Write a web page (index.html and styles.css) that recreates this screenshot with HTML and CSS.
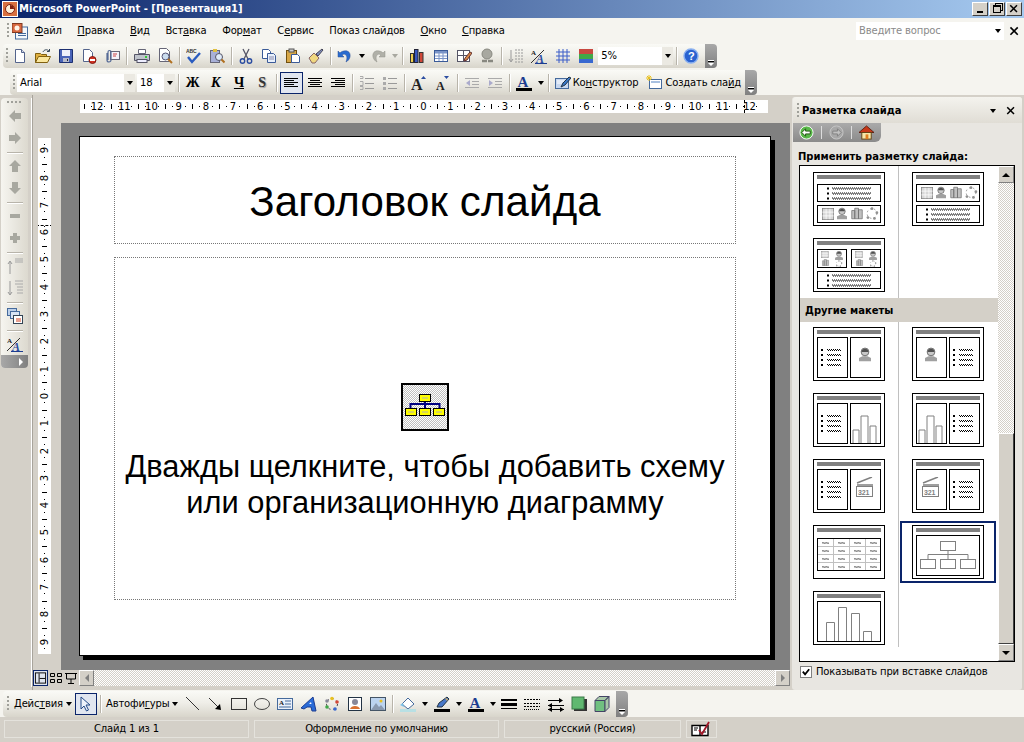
FILE: index.html
```html
<!DOCTYPE html>
<html lang="ru">
<head>
<meta charset="utf-8">
<title>Microsoft PowerPoint</title>
<link rel="stylesheet" href="styles.css">
</head>
<body>
<svg class="defs" aria-hidden="true">
<defs>
<symbol id="new" viewBox="0 0 16 16"><path d="M3.500 1.500h6l3 3v10h-9z" fill="#fff" stroke="#54648c"/><path d="M9.500 1.500v3h3" fill="#d8dcec" stroke="#54648c"/></symbol>
<symbol id="open" viewBox="0 0 16 16"><path d="M.5 5.500h5l1 1h5v8H.5z" fill="#e0b040" stroke="#806010"/><path d="M3.500 8.500h12l-3 6H.5z" fill="#fbe79c" stroke="#806010"/><path d="M8 4c1-2.500 4-3 6-1M14.500 1v2.500H12" fill="none" stroke="#345"/></symbol>
<symbol id="save" viewBox="0 0 16 16"><path d="M1.500 1.500h13v13h-13z" fill="#4a64b8" stroke="#1c2f70"/><rect x="4" y="2" width="8" height="6" fill="#eef0fa"/><rect x="5" y="10" width="6" height="4" fill="#b8bccc"/><rect x="9" y="11" width="1" height="2" fill="#223"/></symbol>
<symbol id="perm" viewBox="0 0 16 16"><path d="M2.500 1.500h6l3 3v9h-9z" fill="#fff" stroke="#54648c"/><circle cx="11.500" cy="12" r="3.500" fill="#d03020" stroke="#801810"/><rect x="9" y="11" width="5" height="2" fill="#fff"/></symbol>
<symbol id="mail" viewBox="0 0 16 16"><rect x="6.500" y="3.500" width="9" height="8" fill="#f4f4fa" stroke="#667"/><path d="M9 6h4M9 8h3" stroke="#c44"/><path d="M3 5v7a2 2 0 0 0 4 0V4a1.500 1.500 0 0 0-3 0v8" fill="none" stroke="#556a96" stroke-width="1.200"/></symbol>
<symbol id="print" viewBox="0 0 16 16"><path d="M4.500 1.500h7v4h-7z" fill="#fff" stroke="#667"/><path d="M.5 6.500h15v6h-15z" fill="#c0c4cc" stroke="#556"/><rect x="3" y="11.500" width="10" height="3" fill="#eef" stroke="#556"/><rect x="11" y="8" width="2" height="2" fill="#3c3"/></symbol>
<symbol id="prev" viewBox="0 0 16 16"><path d="M2.500 .5h7l3 3v10h-10z" fill="#fff" stroke="#667"/><circle cx="8.500" cy="8.500" r="3.500" fill="#cde" stroke="#557"/><path d="M11 11l4 4" stroke="#b07020" stroke-width="2"/></symbol>
<symbol id="spell" viewBox="0 0 16 16"><text x="0" y="5" class="tiny">ABC</text><path d="M2 9l4 5 8-9" fill="none" stroke="#2a5cc0" stroke-width="2.400"/></symbol>
<symbol id="research" viewBox="0 0 16 16"><rect x="1.500" y="2.500" width="9" height="12" fill="#a8b0d8" stroke="#667"/><rect x="4" y="1" width="4" height="3" fill="#e0c040"/><circle cx="10" cy="9" r="3.500" fill="#dfeaf8" stroke="#556"/><path d="M12.500 11.500l3 3" stroke="#b07020" stroke-width="2"/></symbol>
<symbol id="cut" viewBox="0 0 16 16"><path d="M5 1l5 10M11 1L6 11" stroke="#556" stroke-width="1.300" fill="none"/><circle cx="4.500" cy="13" r="2.200" fill="none" stroke="#2a4ca0" stroke-width="1.400"/><circle cx="11.500" cy="13" r="2.200" fill="none" stroke="#2a4ca0" stroke-width="1.400"/></symbol>
<symbol id="copy" viewBox="0 0 16 16"><path d="M1.500 1.500h6l2 2v7h-8z" fill="#fff" stroke="#3a5a98"/><path d="M6.500 5.500h6l2 2v7h-8z" fill="#e8f0fc" stroke="#3a5a98"/><path d="M8 9h5M8 11h5" stroke="#88a"/></symbol>
<symbol id="paste" viewBox="0 0 16 16"><rect x="1.500" y="2.500" width="10" height="12" fill="#d8a848" stroke="#705010"/><rect x="4" y="1" width="5" height="3" fill="#ccc" stroke="#555"/><path d="M6.500 6.500h6l2 2v6h-8z" fill="#fff" stroke="#3a5a98"/></symbol>
<symbol id="brush" viewBox="0 0 16 16"><path d="M1 10l5-5 5 5-4 5H4z" fill="#f0d880" stroke="#866"/><path d="M8 6l6-5 1 1-5 6z" fill="#8090c0" stroke="#445"/></symbol>
<symbol id="undo" viewBox="0 0 16 16"><path d="M4 4c6-3 10 0 9 5-.5 2-2 4-4 5 1-3 2-7-2-8l-2 1 2 2H1V3l2 2z" fill="#2a6cd0" stroke="#2a4c90" stroke-width=".5"/></symbol>
<symbol id="redo" viewBox="0 0 16 16"><path d="M12 4C6 1 2 4 3 9c.5 2 2 4 4 5-1-3-2-7 2-8l2 1-2 2h6V3l-2 2z" fill="#b0b0a8" stroke="#909088" stroke-width=".5"/></symbol>
<symbol id="chart" viewBox="0 0 16 16"><rect x="1.500" y="5.500" width="3" height="9" fill="#f0d050" stroke="#333"/><rect x="5.500" y="1.500" width="3.500" height="13" fill="#3858c0" stroke="#223"/><rect x="10.500" y="4.500" width="3.500" height="10" fill="#d04838" stroke="#333"/></symbol>
<symbol id="table" viewBox="0 0 16 16"><rect x="1.500" y="2.500" width="13" height="11" fill="#fff" stroke="#3a5a98"/><rect x="2" y="3" width="12" height="2.500" fill="#7a94c8"/><path d="M2 8h12M2 10.500h12M6 5v8M10 5v8" stroke="#7a94c8"/></symbol>
<symbol id="tb" viewBox="0 0 16 16"><rect x="1.500" y="2.500" width="12" height="11" fill="#fff" stroke="#556"/><path d="M2 7.500h11M7.500 3v10" stroke="#556"/><path d="M8 13l1-3 5-6 2 1-5 7z" fill="#d88848" stroke="#633"/></symbol>
<symbol id="link" viewBox="0 0 16 16"><circle cx="8" cy="6" r="5" fill="#a8a8a0" stroke="#888880"/><path d="M3 13h5M9 13h5" stroke="#888880" stroke-width="2.500"/></symbol>
<symbol id="expand" viewBox="0 0 16 16"><path d="M3 2v11M1 11l2 3 2-3" fill="none" stroke="#999"/><path d="M7 2h8M7 5h8M7 8h8M7 11h8M7 14h8" stroke="#999" stroke-dasharray="2 1"/></symbol>
<symbol id="aa" viewBox="0 0 16 16"><text x="0" y="7" class="tinyb">A</text><path d="M0 15L13 2" stroke="#333"/><text x="5" y="15" class="ablue">A</text><rect x="4" y="15" width="12" height="1" fill="#1c3c90"/></symbol>
<symbol id="grid" viewBox="0 0 16 16"><path d="M1 4h14M1 8h14M1 12h14M4 1v14M8 1v14M12 1v14" stroke="#3a5cc8"/></symbol>
<symbol id="color" viewBox="0 0 16 16"><rect x="1" y="1" width="14" height="5" fill="#c84840"/><rect x="1" y="6" width="14" height="5" fill="#40a848"/><rect x="1" y="11" width="14" height="4" fill="#3868d0"/></symbol>
<symbol id="help" viewBox="0 0 16 16"><circle cx="8" cy="8" r="7" fill="#2a62d0" stroke="#8ab0f0" stroke-width="1.400"/><text x="5" y="12" class="qm">?</text></symbol>
<symbol id="design" viewBox="0 0 16 16"><rect x=".5" y="3.500" width="13" height="10" fill="#c8d8f0" stroke="#456a9c"/><path d="M2 6h7M2 8h5" stroke="#fff"/><path d="M6 12l2-4 6-6 2 1-6 7z" fill="#3a78c8" stroke="#234"/></symbol>
<symbol id="newsl" viewBox="0 0 16 16"><rect x="3.500" y="4.500" width="12" height="9" fill="#fff" stroke="#456a9c"/><rect x="5" y="6" width="9" height="2" fill="#a8c0e0"/><path d="M3 0v6M0 3h6M1 1l4 4M5 1L1 5" stroke="#e8c020"/></symbol>
<symbol id="alL" viewBox="0 0 16 16"><path d="M1 3.500h14M1 5.500h10M1 7.500h14M1 9.500h10M1 11.500h14" stroke="#000"/></symbol>
<symbol id="alC" viewBox="0 0 16 16"><path d="M1 3.500h14M3 5.500h10M1 7.500h14M3 9.500h10M1 11.500h14" stroke="#000"/></symbol>
<symbol id="alR" viewBox="0 0 16 16"><path d="M1 3.500h14M5 5.500h10M1 7.500h14M5 9.500h10M1 11.500h14" stroke="#000"/></symbol>
<symbol id="num" viewBox="0 0 16 16"><path d="M6 3.500h9M6 8.500h9M6 13.500h9" stroke="#999"/><path d="M1 1.500h3v2H1M1 6.500h3v4H1M1 11.500h3v3H1" fill="none" stroke="#aaa"/></symbol>
<symbol id="bul" viewBox="0 0 16 16"><path d="M6 3.500h9M6 8.500h9M6 13.500h9" stroke="#999"/><rect x="1" y="2" width="3" height="3" fill="#aaa"/><rect x="1" y="7" width="3" height="3" fill="#aaa"/><rect x="1" y="12" width="3" height="3" fill="#aaa"/></symbol>
<symbol id="aup" viewBox="0 0 16 16"><text x="0" y="15" class="abig">A</text><path d="M10 4h5l-2.500-3z" fill="#2a4ca0"/></symbol>
<symbol id="adn" viewBox="0 0 16 16"><text x="2" y="15" class="asm">A</text><path d="M10 1h5l-2.500 3z" fill="#2a4ca0"/></symbol>
<symbol id="ind1" viewBox="0 0 16 16"><path d="M1 3.500h14M8 6.500h7M8 9.500h7M1 12.500h14" stroke="#aaa"/><path d="M6 5L2 8l4 3z" fill="#aac"/></symbol>
<symbol id="ind2" viewBox="0 0 16 16"><path d="M1 3.500h14M8 6.500h7M8 9.500h7M1 12.500h14" stroke="#aaa"/><path d="M2 5l4 3-4 3z" fill="#aac"/></symbol>
<symbol id="acol" viewBox="0 0 16 16"><text x="1.500" y="12" class="abig2">A</text><rect x="0" y="13" width="16" height="3" fill="#000"/></symbol>
<symbol id="larr" viewBox="0 0 16 16"><path d="M2 8l6-6v3h6v6H8v3z" fill="#a8a8a0"/></symbol>
<symbol id="rarr" viewBox="0 0 16 16"><path d="M14 8L8 2v3H2v6h6v3z" fill="#a8a8a0"/></symbol>
<symbol id="uarr" viewBox="0 0 16 16"><path d="M8 2l6 6h-3v6H5V8H2z" fill="#a8a8a0"/></symbol>
<symbol id="darr" viewBox="0 0 16 16"><path d="M8 14l6-6h-3V2H5v6H2z" fill="#a8a8a0"/></symbol>
<symbol id="minus" viewBox="0 0 16 16"><rect x="3" y="6" width="10" height="4" fill="#a8a8a0"/></symbol>
<symbol id="plus" viewBox="0 0 16 16"><path d="M6 3h4v3h3v4h-3v3H6v-3H3V6h3z" fill="#a8a8a0"/></symbol>
<symbol id="collapse" viewBox="0 0 16 16"><path d="M8 0h9M8 2h9M8 4h9" stroke="#aaa"/><path d="M3 4v12M1 6l2-3 2 3" fill="none" stroke="#999"/></symbol>
<symbol id="expand2" viewBox="0 0 16 16"><path d="M8 1h8M8 4h8M10 7h6M10 10h6M10 13h6" stroke="#aaa"/><path d="M3 1v13M1 12l2 3 2-3" fill="none" stroke="#999"/></symbol>
<symbol id="slides" viewBox="0 0 16 16"><rect x=".5" y=".5" width="9" height="7" fill="#bcd0ea" stroke="#456a9c"/><rect x="3.500" y="3.500" width="9" height="7" fill="#d8e4f4" stroke="#456a9c"/><rect x="6.500" y="7.500" width="9" height="8" fill="#fff" stroke="#345"/><path d="M9 11h5M9 13h5" stroke="#d04020"/></symbol>
<symbol id="cursor" viewBox="0 0 16 16"><path d="M3 1v12l3-3 2.500 5 2-1L8 9h4z" fill="#eef3fb" stroke="#234a88"/></symbol>
<symbol id="sline" viewBox="0 0 16 16"><path d="M1 1l13 13" stroke="#333"/></symbol>
<symbol id="sarrow" viewBox="0 0 16 16"><path d="M1 2l9 9" stroke="#333"/><path d="M7 13l6 1-1-6z" fill="#000"/></symbol>
<symbol id="srect" viewBox="0 0 16 16"><rect x=".5" y="2.500" width="15" height="11" fill="none" stroke="#333"/></symbol>
<symbol id="soval" viewBox="0 0 16 16"><ellipse cx="8" cy="8" rx="7.500" ry="5.500" fill="none" stroke="#444"/></symbol>
<symbol id="tbox" viewBox="0 0 16 16"><rect x=".5" y="2.500" width="15" height="11" fill="#eaf0fa" stroke="#456a9c"/><text x="2" y="9" class="tinyb">A</text><path d="M8 5h6M8 8h6M2 11h12" stroke="#456a9c"/></symbol>
<symbol id="wart" viewBox="0 0 16 16"><path d="M0 12L12 1l3 14h-4l-1-4H6l-3 2z" fill="#2a6cd8" stroke="#1c3c90"/><path d="M8 8l2-2 .5 2z" fill="#fff"/></symbol>
<symbol id="dgm" viewBox="0 0 16 16"><circle cx="8" cy="8" r="5.500" fill="none" stroke="#444" stroke-dasharray="2 3"/><circle cx="8" cy="2.500" r="1.800" fill="#e8c020"/><circle cx="13" cy="6" r="1.800" fill="#d04838"/><circle cx="11" cy="13" r="1.800" fill="#3868d0"/><circle cx="3" cy="11" r="1.800" fill="#40a848"/><circle cx="3" cy="5" r="1.800" fill="#889"/></symbol>
<symbol id="clip" viewBox="0 0 16 16"><rect x="1.500" y="1.500" width="13" height="13" fill="#fff" stroke="#234"/><circle cx="8" cy="6" r="3" fill="#889"/><path d="M3 13c1-4 9-4 10 0z" fill="#d87030"/></symbol>
<symbol id="pict" viewBox="0 0 16 16"><rect x=".5" y="1.500" width="15" height="13" fill="#bcd4f0" stroke="#456"/><path d="M1 14l5-7 3 4 2-2 4 5z" fill="#8a9ab0"/><circle cx="11" cy="5" r="1.500" fill="#e8c020"/></symbol>
<symbol id="fill" viewBox="0 0 16 16"><path d="M2 8l6-6 6 6-6 5z" fill="#fff" stroke="#456a9c"/><path d="M0 9l3-2 1 4z" fill="#7ac0e8"/><rect x="0" y="13" width="16" height="3" fill="#b8e0e4"/></symbol>
<symbol id="pen" viewBox="0 0 16 16"><path d="M3 11l2-4 8-6 2 2-7 8z" fill="#4878c8" stroke="#234"/><path d="M11 2l3 1-1 2z" fill="#d8b060"/><rect x="0" y="13" width="16" height="3" fill="#000"/></symbol>
<symbol id="lsty" viewBox="0 0 16 16"><rect x="0" y="3" width="16" height="2" fill="#000"/><rect x="0" y="7" width="16" height="3" fill="#000"/><rect x="0" y="12" width="16" height="1" fill="#000"/></symbol>
<symbol id="dash" viewBox="0 0 16 16"><path d="M0 3.500h16M0 7.500h16M0 10.500h16" stroke="#000" stroke-dasharray="2 1"/><path d="M0 13.500h16" stroke="#000" stroke-dasharray="1 1"/></symbol>
<symbol id="arrs" viewBox="0 0 16 16"><path d="M0 4.500h14M0 9.500h16M0 13.500h16" stroke="#000"/><path d="M11 2l4 2.500-4 2.500zM4 7L0 9.500 4 12zM12 11l4 2.500-4 2.500zM4 11L0 13.500 4 16z"/></symbol>
<symbol id="shad" viewBox="0 0 16 16"><rect x="3" y="3" width="13" height="12" fill="#333"/><rect x="1" y="1" width="12" height="12" fill="#60b870" stroke="#3a7a48"/></symbol>
<symbol id="cube" viewBox="0 0 16 16"><path d="M1 4.500h10v11H1z" fill="#70c080" stroke="#446"/><path d="M1 4.500l4-4h10l-4 4zM11 4.500l4-4v11l-4 4z" fill="#a8c8a8" stroke="#446"/></symbol>
<symbol id="book" viewBox="0 0 20 16"><path d="M1 4.500h8v10H1zM9 4.500h8v10H9z" fill="#fff" stroke="#000" stroke-width="1.400"/><path d="M3 7h4M3 9h3M11 11h4" stroke="#000"/><path d="M8 9l3 4 7-12" fill="none" stroke="#a01828" stroke-width="1.800"/></symbol>
<symbol id="x" viewBox="0 0 16 16"><path d="M3 3l9 9M12 3l-9 9" stroke="#000" stroke-width="2"/></symbol>
<symbol id="logo" viewBox="0 0 16 16"><rect x="3.500" y="3.500" width="12" height="12" fill="#f4f8fc" stroke="#456a9c"/><path d="M6 10h8M6 12h8" stroke="#456a9c"/><rect x="0" y="0" width="10" height="9" fill="#d86840" stroke="#803820"/><circle cx="5" cy="4.500" r="2.500" fill="#fff4e8"/></symbol>
<symbol id="tlogo" viewBox="0 0 16 16"><rect x=".5" y=".5" width="15" height="15" fill="#d87040" stroke="#fff"/><circle cx="8" cy="8" r="4.500" fill="#fff0d8" stroke="#802010"/><path d="M8 8V4a4 4 0 0 1 4 4z" fill="#802010"/></symbol>
<symbol id="bullets3" viewBox="0 0 64 17"><path d="M15 3.500h39M15 8.500h39M15 13.500h39" stroke="#000" stroke-dasharray="1 1"/><path d="M15 4.500h39M15 9.500h39M15 14.500h39" stroke="#000" stroke-dasharray="1 1" stroke-dashoffset="1"/><rect x="10" y="3" width="2" height="2"/><rect x="10" y="8" width="2" height="2"/><rect x="10" y="13" width="2" height="2"/></symbol>
<symbol id="bullets4" viewBox="0 0 32 40"><path d="M10 12.500h14M10 17.500h14M10 22.500h14M10 27.500h14" stroke="#000" stroke-dasharray="1 1"/><path d="M10 13.500h14M10 18.500h14M10 23.500h14M10 28.500h14" stroke="#000" stroke-dasharray="1 1" stroke-dashoffset="1"/><rect x="4" y="12" width="2" height="2"/><rect x="4" y="17" width="2" height="2"/><rect x="4" y="22" width="2" height="2"/><rect x="4" y="27" width="2" height="2"/></symbol>
<symbol id="person" viewBox="0 0 14 16"><path d="M0 16v-4l4-2h6l4 2v4z" fill="#a0a0a0"/><circle cx="7" cy="5" r="4.500" fill="#c8c8c8" stroke="#606060"/><path d="M3 5c0-5 8-5 8 0" fill="#505050"/></symbol>
<symbol id="tgrid" viewBox="0 0 16 16"><rect x=".5" y=".5" width="15" height="15" fill="#d8d8d8" stroke="#808080"/><path d="M.5 5.500h15M.5 10.500h15M5.500 1v14M10.500 1v14" stroke="#fff"/></symbol>
<symbol id="tchart" viewBox="0 0 16 16"><path d="M1 15V4h4v11M5 15V1h5v14M10 15V3h5v12H1" fill="#c0c0c0" stroke="#707070"/></symbol>
<symbol id="tdiag" viewBox="0 0 16 16"><circle cx="8" cy="8" r="6" fill="none" stroke="#808080" stroke-dasharray="2 3"/><circle cx="8" cy="2" r="1.700" fill="#909090"/><circle cx="14" cy="7" r="1.700" fill="#909090"/><circle cx="11" cy="14" r="1.700" fill="#909090"/><circle cx="3" cy="13" r="1.700" fill="#909090"/></symbol>
<symbol id="th-base" viewBox="0 0 72 54"><rect x=".5" y=".5" width="71" height="53" fill="#fff" stroke="#000"/><rect x="4" y="3" width="64" height="4" fill="#808080"/></symbol>
<symbol id="clapper" viewBox="0 0 18 20"><path d="M1 6L16 0M1 8h16" stroke="#808080" stroke-width="1.500"/><rect x=".5" y="9.500" width="16" height="10" fill="#fff" stroke="#808080"/><text x="2" y="17.500" class="clap">321</text></symbol>
<symbol id="bars" viewBox="0 0 30 30"><path d="M1 30V17h6v13M9 30V3h7v27M18 30V13h6v17" fill="none" stroke="#808080"/></symbol>
<symbol id="wave" viewBox="0 0 10 2"><path d="M0 .5h10" stroke="#000" stroke-dasharray="1 1"/><path d="M0 1.500h10" stroke="#000" stroke-dasharray="1 1" stroke-dashoffset="1"/></symbol>
</defs>
</svg>

<div class="app">
  <header class="titlebar">
    <svg class="ic"><use href="#tlogo"/></svg>
    <span class="title-text">Microsoft PowerPoint - [Презентация1]</span>
    <span class="winbtns">
      <span class="wbtn"><i class="w-min"></i></span>
      <span class="wbtn"><i class="w-max"></i></span>
      <span class="wbtn"><svg class="wx"><use href="#x"/></svg></span>
    </span>
  </header>

  <div class="chrome">
    <nav class="menubar">
      <i class="grip"></i>
      <svg class="ic menu-logo"><use href="#logo"/></svg>
      <span class="mi"><u>Ф</u>айл</span>
      <span class="mi"><u>П</u>равка</span>
      <span class="mi"><u>В</u>ид</span>
      <span class="mi">Вст<u>а</u>вка</span>
      <span class="mi">Фор<u>м</u>ат</span>
      <span class="mi">С<u>е</u>рвис</span>
      <span class="mi">Показ слайдов</span>
      <span class="mi"><u>О</u>кно</span>
      <span class="mi"><u>С</u>правка</span>
      <span class="ask"><span class="ask-text">Введите вопрос</span><span class="dd-plain"><i class="caret"></i></span></span>
      <svg class="menu-x"><use href="#x"/></svg>
    </nav>

    <div class="toolbar tb1">
      <i class="grip"></i>
      <span class="b"><svg class="ic"><use href="#new"/></svg></span>
      <span class="b"><svg class="ic"><use href="#open"/></svg></span>
      <span class="b"><svg class="ic"><use href="#save"/></svg></span>
      <span class="b"><svg class="ic"><use href="#perm"/></svg></span>
      <span class="b"><svg class="ic"><use href="#mail"/></svg></span>
      <i class="sep"></i>
      <span class="b"><svg class="ic"><use href="#print"/></svg></span>
      <span class="b"><svg class="ic"><use href="#prev"/></svg></span>
      <i class="sep"></i>
      <span class="b"><svg class="ic"><use href="#spell"/></svg></span>
      <span class="b"><svg class="ic"><use href="#research"/></svg></span>
      <i class="sep"></i>
      <span class="b"><svg class="ic"><use href="#cut"/></svg></span>
      <span class="b"><svg class="ic"><use href="#copy"/></svg></span>
      <span class="b"><svg class="ic"><use href="#paste"/></svg></span>
      <span class="b"><svg class="ic"><use href="#brush"/></svg></span>
      <i class="sep"></i>
      <span class="b"><svg class="ic"><use href="#undo"/></svg></span>
      <span class="dd"><i class="caret"></i></span>
      <span class="b"><svg class="ic"><use href="#redo"/></svg></span>
      <span class="dd"><i class="caret off"></i></span>
      <i class="sep"></i>
      <span class="b"><svg class="ic"><use href="#chart"/></svg></span>
      <span class="b"><svg class="ic"><use href="#table"/></svg></span>
      <span class="b"><svg class="ic"><use href="#tb"/></svg></span>
      <span class="b"><svg class="ic"><use href="#link"/></svg></span>
      <i class="sep"></i>
      <span class="b"><svg class="ic"><use href="#expand"/></svg></span>
      <span class="b"><svg class="ic"><use href="#aa"/></svg></span>
      <span class="b"><svg class="ic"><use href="#grid"/></svg></span>
      <span class="b"><svg class="ic"><use href="#color"/></svg></span>
      <span class="combo zoom"><span class="combo-text">5%</span><span class="combo-dd"><i class="caret"></i></span></span>
      <i class="sep"></i>
      <span class="b"><svg class="ic"><use href="#help"/></svg></span>
      <i class="chev"></i>
    </div>

    <div class="toolbar tb2">
      <i class="grip"></i>
      <span class="combo font"><span class="combo-text">Arial</span><span class="combo-dd"><i class="caret"></i></span></span>
      <span class="combo size"><span class="combo-text">18</span><span class="combo-dd"><i class="caret"></i></span></span>
      <i class="sep"></i>
      <span class="b fmt">Ж</span>
      <span class="b fmt it">К</span>
      <span class="b fmt ul">Ч</span>
      <span class="b fmt sh">S</span>
      <i class="sep"></i>
      <span class="b on"><svg class="ic"><use href="#alL"/></svg></span>
      <span class="b"><svg class="ic"><use href="#alC"/></svg></span>
      <span class="b"><svg class="ic"><use href="#alR"/></svg></span>
      <i class="sep"></i>
      <span class="b"><svg class="ic"><use href="#num"/></svg></span>
      <span class="b"><svg class="ic"><use href="#bul"/></svg></span>
      <i class="sep"></i>
      <span class="b"><svg class="ic"><use href="#aup"/></svg></span>
      <span class="b"><svg class="ic"><use href="#adn"/></svg></span>
      <i class="sep"></i>
      <span class="b"><svg class="ic"><use href="#ind1"/></svg></span>
      <span class="b"><svg class="ic"><use href="#ind2"/></svg></span>
      <i class="sep"></i>
      <span class="b"><svg class="ic"><use href="#acol"/></svg></span>
      <span class="dd"><i class="caret"></i></span>
      <i class="sep"></i>
      <span class="tbtn"><svg class="ic"><use href="#design"/></svg><span>Ко<u>н</u>структор</span></span>
      <span class="tbtn tbtn-new"><svg class="ic"><use href="#newsl"/></svg><span>Создать сла<u>й</u>д</span></span>
      <i class="chev"></i>
    </div>
  </div>

  <main class="main">
    <aside class="vtoolbar">
      <i class="vgrip"></i>
      <span class="vb"><svg class="ic"><use href="#larr"/></svg></span>
      <span class="vb"><svg class="ic"><use href="#rarr"/></svg></span>
      <i class="vsep"></i>
      <span class="vb"><svg class="ic"><use href="#uarr"/></svg></span>
      <span class="vb"><svg class="ic"><use href="#darr"/></svg></span>
      <i class="vsep"></i>
      <span class="vb"><svg class="ic"><use href="#minus"/></svg></span>
      <span class="vb"><svg class="ic"><use href="#plus"/></svg></span>
      <i class="vsep"></i>
      <span class="vb"><svg class="ic"><use href="#collapse"/></svg></span>
      <span class="vb"><svg class="ic"><use href="#expand2"/></svg></span>
      <i class="vsep"></i>
      <span class="vb"><svg class="ic"><use href="#slides"/></svg></span>
      <i class="vsep"></i>
      <span class="vb"><svg class="ic"><use href="#aa"/></svg></span>
      <i class="vchev"></i>
    </aside>

    <section class="editor">
      <div class="hruler-row">
        <div class="hruler">
          <span>12</span><span>11</span><span>10</span><span>9</span><span>8</span><span>7</span><span>6</span><span>5</span><span>4</span><span>3</span><span>2</span><span>1</span><span>0</span><span>1</span><span>2</span><span>3</span><span>4</span><span>5</span><span>6</span><span>7</span><span>8</span><span>9</span><span>10</span><span>11</span><span>12</span>
          <i class="hmark"></i>
        </div>
      </div>
      <div class="work-row">
        <div class="vruler-col">
          <div class="vruler">
            <span><b>9</b></span><span><b>8</b></span><span><b>7</b></span><span><b>6</b></span><span><b>5</b></span><span><b>4</b></span><span><b>3</b></span><span><b>2</b></span><span><b>1</b></span><span><b>0</b></span><span><b>1</b></span><span><b>2</b></span><span><b>3</b></span><span><b>4</b></span><span><b>5</b></span><span><b>6</b></span><span><b>7</b></span><span><b>8</b></span><span><b>9</b></span>
            <i class="vmark"></i>
          </div>
        </div>
        <div class="work">
          <div class="slide">
            <div class="ph ph-title">Заголовок слайда</div>
            <div class="ph ph-body">
              <svg class="org" viewBox="0 0 48 48">
                <rect x="1" y="1" width="46" height="46" fill="none" stroke="#000" stroke-width="2"/>
                <path d="M24 18v3M9.500 25v-4h29v4M24 21v4" fill="none" stroke="#000080" stroke-width="2"/>
                <g fill="#ffff00" stroke="#000"><rect x="18.500" y="11.500" width="11" height="7"/><rect x="4.500" y="25.500" width="11" height="7"/><rect x="18.500" y="25.500" width="11" height="7"/><rect x="32.500" y="25.500" width="11" height="7"/></g>
                <path d="M21 15h6M7 29h6M21 29h6M35 29h6" stroke="#b0b0b0"/>
              </svg>
              <div class="ph-text">Дважды щелкните, чтобы добавить схему<br>или организационную диаграмму</div>
            </div>
          </div>
        </div>
      </div>
      <div class="hscroll-row">
        <div class="views">
          <span class="view on"><svg viewBox="0 0 14 14"><rect x="1.500" y="1.500" width="11" height="11" fill="none" stroke="#000"/><path d="M5.500 2v10M6 7.500h6" stroke="#000"/></svg></span>
          <span class="view"><svg viewBox="0 0 14 14"><path d="M1.500 2.500h4v3h-4zM8.500 2.500h4v3h-4zM1.500 8.500h4v3h-4zM8.500 8.500h4v3h-4z" fill="none" stroke="#000"/></svg></span>
          <span class="view"><svg viewBox="0 0 14 14"><path d="M1 2.500h12M2.500 3v5h9V3M7 8v4M4 12.500h6" fill="none" stroke="#000"/></svg></span>
        </div>
        <span class="sbtn"><i class="tri-l"></i></span>
        <span class="strack"></span>
        <span class="sbtn"><i class="tri-r"></i></span>
      </div>
    </section>

    <aside class="pane">
      <div class="pane-head"><i class="grip"></i><span class="pane-title">Разметка слайда</span><i class="caret pane-caret"></i><svg class="pane-x"><use href="#x"/></svg></div>
      <div class="pane-nav">
        <svg class="nav-ic" viewBox="0 0 16 16"><circle cx="8" cy="8" r="7" fill="#58b848" stroke="#fff"/><path d="M3 8l4-4v2.500h5v3H7V12z" fill="#fff" stroke="#205010"/></svg>
        <i class="nav-sep"></i>
        <svg class="nav-ic" viewBox="0 0 16 16"><circle cx="8" cy="8" r="7" fill="#a8a8a8" stroke="#c8c8c8"/><path d="M13 8L9 4v2.500H4v3h5V12z" fill="#c0c0c0" stroke="#808080"/></svg>
        <i class="nav-sep"></i>
        <svg class="nav-ic" viewBox="0 0 16 16"><path d="M0 8l8-7 8 7z" fill="#c83818" stroke="#602010"/><rect x="3" y="8" width="10" height="7" fill="#f8e8a8" stroke="#604010"/><rect x="7" y="10" width="3" height="5" fill="#e08020"/></svg>
      </div>
      <div class="pane-label">Применить разметку слайда:</div>
      <div class="list">
        <div class="list-main">
          <div class="thumbs">
            <div class="cell"><svg class="th" viewBox="0 0 72 54"><use href="#th-base" width="72" height="54"/><g fill="none" stroke="#000"><rect x="4.500" y="12.500" width="63" height="17"/><rect x="4.500" y="33.500" width="63" height="17"/></g><use href="#bullets3" x="4" y="12.500" width="64" height="17"/><use href="#tgrid" x="9" y="36" width="12" height="12"/><use href="#person" x="24" y="35" width="10" height="13"/><use href="#tchart" x="38" y="35" width="12" height="13"/><use href="#tdiag" x="52" y="35" width="14" height="13"/></svg></div>
            <div class="cell"><svg class="th" viewBox="0 0 72 54"><use href="#th-base" width="72" height="54"/><g fill="none" stroke="#000"><rect x="4.500" y="12.500" width="63" height="17"/><rect x="4.500" y="33.500" width="63" height="17"/></g><use href="#tgrid" x="9" y="15" width="12" height="12"/><use href="#person" x="24" y="14" width="10" height="13"/><use href="#tchart" x="38" y="14" width="12" height="13"/><use href="#tdiag" x="52" y="14" width="14" height="13"/><use href="#bullets3" x="4" y="33.500" width="64" height="17"/></svg></div>
            <div class="cell"><svg class="th" viewBox="0 0 72 54"><use href="#th-base" width="72" height="54"/><g fill="none" stroke="#000"><rect x="4.500" y="11.500" width="29" height="18"/><rect x="38.500" y="11.500" width="29" height="18"/><rect x="4.500" y="33.500" width="63" height="17"/></g><use href="#tgrid" x="7" y="13" width="10" height="7"/><use href="#person" x="22" y="13" width="8" height="9"/><use href="#tchart" x="8" y="21" width="9" height="7"/><use href="#tdiag" x="21" y="22" width="10" height="7"/><use href="#tgrid" x="41" y="13" width="10" height="7"/><use href="#person" x="56" y="13" width="8" height="9"/><use href="#tchart" x="42" y="21" width="9" height="7"/><use href="#tdiag" x="55" y="22" width="10" height="7"/><use href="#bullets3" x="4" y="33.500" width="64" height="17"/></svg></div>
          </div>
          <div class="group">Другие макеты</div>
          <div class="thumbs t2">
            <div class="cell"><svg class="th" viewBox="0 0 72 54"><use href="#th-base" width="72" height="54"/><g fill="none" stroke="#000"><rect x="4.500" y="10.500" width="30" height="40"/><rect x="37.500" y="10.500" width="30" height="40"/></g><use href="#bullets4" x="4" y="10" width="32" height="40"/><use href="#person" x="46" y="20" width="12" height="15"/></svg></div>
            <div class="cell"><svg class="th" viewBox="0 0 72 54"><use href="#th-base" width="72" height="54"/><g fill="none" stroke="#000"><rect x="4.500" y="10.500" width="30" height="40"/><rect x="37.500" y="10.500" width="30" height="40"/></g><use href="#person" x="13" y="20" width="12" height="15"/><use href="#bullets4" x="37" y="10" width="32" height="40"/></svg></div>
            <div class="cell"><svg class="th" viewBox="0 0 72 54"><use href="#th-base" width="72" height="54"/><g fill="none" stroke="#000"><rect x="4.500" y="10.500" width="30" height="40"/><rect x="37.500" y="10.500" width="30" height="40"/></g><use href="#bullets4" x="4" y="10" width="32" height="40"/><use href="#bars" x="39" y="20" width="30" height="30"/></svg></div>
            <div class="cell"><svg class="th" viewBox="0 0 72 54"><use href="#th-base" width="72" height="54"/><g fill="none" stroke="#000"><rect x="4.500" y="10.500" width="30" height="40"/><rect x="37.500" y="10.500" width="30" height="40"/></g><use href="#bars" x="6" y="20" width="30" height="30"/><use href="#bullets4" x="37" y="10" width="32" height="40"/></svg></div>
            <div class="cell"><svg class="th" viewBox="0 0 72 54"><use href="#th-base" width="72" height="54"/><g fill="none" stroke="#000"><rect x="4.500" y="10.500" width="30" height="40"/><rect x="37.500" y="10.500" width="30" height="40"/></g><use href="#bullets4" x="4" y="10" width="32" height="40"/><use href="#clapper" x="43" y="18" width="18" height="20"/></svg></div>
            <div class="cell"><svg class="th" viewBox="0 0 72 54"><use href="#th-base" width="72" height="54"/><g fill="none" stroke="#000"><rect x="4.500" y="10.500" width="30" height="40"/><rect x="37.500" y="10.500" width="30" height="40"/></g><use href="#clapper" x="10" y="18" width="18" height="20"/><use href="#bullets4" x="37" y="10" width="32" height="40"/></svg></div>
            <div class="cell"><svg class="th" viewBox="0 0 72 54"><use href="#th-base" width="72" height="54"/><rect x="4.500" y="13.500" width="63" height="32" fill="#fff" stroke="#000"/><path d="M5 21.500h62M5 29.500h62M5 37.500h62M20.500 14v31M36.500 14v31M52.500 14v31" stroke="#c0c0c0"/><g><use href="#wave" x="9" y="17" width="7" height="2"/><use href="#wave" x="25" y="17" width="7" height="2"/><use href="#wave" x="41" y="17" width="7" height="2"/><use href="#wave" x="57" y="17" width="7" height="2"/><use href="#wave" x="9" y="25" width="7" height="2"/><use href="#wave" x="25" y="25" width="7" height="2"/><use href="#wave" x="41" y="25" width="7" height="2"/><use href="#wave" x="57" y="25" width="7" height="2"/><use href="#wave" x="9" y="33" width="7" height="2"/><use href="#wave" x="25" y="33" width="7" height="2"/><use href="#wave" x="41" y="33" width="7" height="2"/><use href="#wave" x="57" y="33" width="7" height="2"/><use href="#wave" x="9" y="41" width="7" height="2"/><use href="#wave" x="25" y="41" width="7" height="2"/><use href="#wave" x="41" y="41" width="7" height="2"/><use href="#wave" x="57" y="41" width="7" height="2"/></g></svg></div>
            <div class="cell sel"><svg class="th" viewBox="0 0 72 54"><use href="#th-base" width="72" height="54"/><rect x="4.500" y="10.500" width="63" height="40" fill="none" stroke="#000"/><g fill="none" stroke="#808080"><rect x="28.500" y="16.500" width="15" height="9"/><rect x="8.500" y="34.500" width="15" height="9"/><rect x="28.500" y="34.500" width="15" height="9"/><rect x="48.500" y="34.500" width="15" height="9"/><path d="M36 26v8M16 34v-4.500h40V34"/></g></svg></div>
            <div class="cell"><svg class="th" viewBox="0 0 72 54"><use href="#th-base" width="72" height="54"/><rect x="4.500" y="10.500" width="63" height="40" fill="none" stroke="#000"/><path d="M13.500 50V31.500h8V50M25.500 50V16.500h8V50M38.500 50V22.500h8V50M50.500 50V40.500h8V50" fill="none" stroke="#808080"/></svg></div>
          </div>
        </div>
        <div class="vscroll">
          <span class="sbtn v"><i class="tri-u"></i></span>
          <span class="vtrack"></span>
          <span class="vthumb"></span>
          <span class="sbtn v"><i class="tri-d"></i></span>
        </div>
      </div>
      <label class="show"><span class="chk"><svg viewBox="0 0 11 11"><path d="M2 5l2.500 3L9 2.500" fill="none" stroke="#000" stroke-width="2"/></svg></span>Показывать при вставке слайдов</label>
    </aside>
  </main>

  <div class="draw-band">
    <div class="toolbar tb3">
      <i class="grip"></i>
      <span class="tbtn act"><span>Дейс<u>т</u>вия</span><i class="caret"></i></span>
      <span class="b on cur"><svg class="ic"><use href="#cursor"/></svg></span>
      <i class="sep"></i>
      <span class="tbtn shapes"><span>Автофи<u>г</u>уры</span><i class="caret"></i></span>
      <span class="b"><svg class="ic"><use href="#sline"/></svg></span>
      <span class="b"><svg class="ic"><use href="#sarrow"/></svg></span>
      <span class="b"><svg class="ic"><use href="#srect"/></svg></span>
      <span class="b"><svg class="ic"><use href="#soval"/></svg></span>
      <span class="b"><svg class="ic"><use href="#tbox"/></svg></span>
      <span class="b"><svg class="ic"><use href="#wart"/></svg></span>
      <span class="b"><svg class="ic"><use href="#dgm"/></svg></span>
      <span class="b"><svg class="ic"><use href="#clip"/></svg></span>
      <span class="b"><svg class="ic"><use href="#pict"/></svg></span>
      <i class="sep"></i>
      <span class="b n"><svg class="ic"><use href="#fill"/></svg></span><span class="dd"><i class="caret"></i></span>
      <span class="b n"><svg class="ic"><use href="#pen"/></svg></span><span class="dd"><i class="caret"></i></span>
      <span class="b n"><svg class="ic"><use href="#acol"/></svg></span><span class="dd"><i class="caret"></i></span>
      <span class="b"><svg class="ic"><use href="#lsty"/></svg></span>
      <span class="b"><svg class="ic"><use href="#dash"/></svg></span>
      <span class="b"><svg class="ic"><use href="#arrs"/></svg></span>
      <span class="b"><svg class="ic"><use href="#shad"/></svg></span>
      <span class="b"><svg class="ic"><use href="#cube"/></svg></span>
      <i class="chev"></i>
    </div>
  </div>

  <footer class="status">
    <span class="panel p1">Слайд 1 из 1</span>
    <span class="panel p2">Оформление по умолчанию</span>
    <span class="panel p3">русский (Россия)</span>
    <span class="panel p4"><svg class="book"><use href="#book"/></svg></span>
  </footer>
</div>
</body>
</html>
```
FILE: styles.css
```css
* { box-sizing: border-box; }
html, body { margin: 0; padding: 0; }
body { width: 1024px; height: 742px; overflow: hidden; background: #d4d0c8; color: #000; font: 10px/1 "DejaVu Sans", sans-serif; letter-spacing: -0.17px; }
i { display: block; font-style: normal; }
u { text-underline-offset: 1px; }
.defs { position: absolute; width: 0; height: 0; }
.tiny { font: bold 5px "Liberation Sans", sans-serif; fill: #333; }
.tinyb { font: bold 7px "Liberation Serif", serif; fill: #222; }
.ablue { font: bold italic 12px "Liberation Serif", serif; fill: #2a4ca0; }
.qm { font: bold 11px "Liberation Sans", sans-serif; fill: #fff; }
.abig { font: bold 16px "Liberation Serif", serif; fill: #222; }
.asm { font: bold 12px "Liberation Serif", serif; fill: #222; }
.abig2 { font: bold 15px "Liberation Serif", serif; fill: #1c3c90; }
.clap { font: bold 7px "Liberation Sans", sans-serif; fill: #808080; }

.app { display: flex; flex-direction: column; width: 1024px; height: 742px; }
.ic { width: 16px; height: 16px; flex: none; display: block; }

.titlebar { height: 18px; flex: none; display: flex; align-items: center; padding: 0 2px; gap: 1px; background: linear-gradient(90deg, #0a246a, #a6caf0); }
.title-text { color: #fff; font: bold 10px/1 "DejaVu Sans", sans-serif; letter-spacing: 0; white-space: nowrap; }
.winbtns { margin-left: auto; display: flex; gap: 1px; }
.wbtn { width: 16px; height: 14px; background: #d4d0c8; border: 1px solid; border-color: #fff #404040 #404040 #fff; display: flex; align-items: center; justify-content: center; position: relative; }
.w-min { width: 6px; height: 2px; background: #000; align-self: flex-end; margin-bottom: 2px; }
.w-max { width: 8px; height: 8px; border: 1px solid #000; border-top-width: 2px; box-shadow: 2px -2px 0 -1px #d4d0c8, 2px -2px 0 0 #000; }
.wx { width: 12px; height: 12px; }

.chrome { height: 77px; flex: none; background: #f5f4ef; display: flex; flex-direction: column; }
.menubar { height: 26px; flex: none; display: flex; align-items: center; padding-left: 7px; }
.grip { width: 2px; height: 16px; flex: none; background: linear-gradient(#a0a09a 2px, transparent 2px) 0 0 / 2px 4px repeat-y; }
.menu-logo { margin: 0 -1px 0 3px; width: 16px; height: 17px; }
.mi { padding: 0 7.800px; white-space: nowrap; font-size: 10px; }
.ask { margin-left: auto; width: 148px; height: 18px; background: #fff; display: flex; align-items: center; color: #8a8a8a; padding-left: 3px; }
.ask-text { flex: 1; }
.dd-plain { width: 12px; display: flex; justify-content: center; }
.menu-x { width: 13px; height: 13px; margin: 0 3px 0 4px; }

.toolbar { display: flex; align-items: center; border-radius: 4px; background: linear-gradient(#fafaf6, #efeee8 45%, #d8d5cb); flex: none; }
.tb1 { width: 714px; height: 24px; margin-left: 3px; padding-left: 3px; }
.tb2 { width: 747px; height: 25px; margin: 2px 0 0 10px; padding-left: 3px; }
.b { width: 23.200px; height: 22px; display: flex; align-items: center; justify-content: center; flex: none; }
.b.n { width: 24px; }
.b.on { background: #e1e6f0; border: 1px solid #0a246a; }
.dd { width: 10px; height: 22px; display: flex; align-items: center; justify-content: center; flex: none; }
.caret { width: 0; height: 0; border: 3px solid transparent; border-top: 4px solid #000; border-bottom: 0; flex: none; }
.caret.off { border-top-color: #a8a8a0; }
.sep { width: 1px; height: 18px; background: #b8b4aa; box-shadow: 1px 0 0 #fff; flex: none; margin: 0 2.500px; }
.chev { width: 12px; height: 100%; margin-left: auto; flex: none; background: linear-gradient(#a8a8a8, #808080); border-radius: 0 4px 4px 0; position: relative; }
.chev::before { content: ""; position: absolute; left: 3px; bottom: 7px; width: 6px; height: 1px; background: #fff; box-shadow: 0 1px 0 #000; }
.chev::after { content: ""; position: absolute; left: 3px; bottom: 2px; border: 3px solid transparent; border-top: 3px solid #fff; border-bottom: 0; }

.combo { height: 18px; background: #fff; display: flex; align-items: center; flex: none; }
.combo-text { flex: 1; padding-left: 3px; }
.combo-dd { width: 11px; height: 100%; background: #ebe9e2; display: flex; align-items: center; justify-content: center; }
.font { width: 118px; margin-left: 2px; }
.size { width: 38px; margin-left: 2px; }
.zoom { width: 75px; margin-left: 1px; }
.fmt { font: bold 14px "Liberation Serif", serif; }
.it { font-style: italic; }
.ul { text-decoration: underline; }
.sh { color: #333; text-shadow: 1px 1px 1px #999; }
.tbtn { display: inline-flex; align-items: center; gap: 2px; white-space: nowrap; flex: none; padding: 0 3px; }
.tbtn-new { gap: 3px; margin-left: 2px; }

.main { height: 595px; flex: none; display: flex; background: #d4d0c8; }
.vtoolbar { width: 27px; height: 270px; margin: 3px 0 0 1px; flex: none; display: flex; flex-direction: column; align-items: center; border-radius: 4px; background: linear-gradient(90deg, #f6f5f0, #dcd9cf); padding-top: 3px; }
.vgrip { width: 16px; height: 2px; background: linear-gradient(90deg, #a0a09a 2px, transparent 2px) 0 0 / 4px 2px repeat-x; margin-bottom: 2px; }
.vb { width: 24px; height: 22px; flex: none; display: flex; align-items: center; justify-content: center; }
.vsep { width: 16px; height: 1px; background: #b8b4aa; box-shadow: 0 1px 0 #fff; margin: 2.500px 0; flex: none; }
.vchev { width: 100%; height: 13px; margin-top: auto; background: linear-gradient(90deg, #a8a8a8, #808080); border-radius: 0 0 4px 4px; position: relative; }
.vchev::after { content: ""; position: absolute; right: 5px; top: 3px; border: 4px solid transparent; border-left: 4px solid #fff; border-right: 0; }

.editor { width: 758px; margin-left: 4px; flex: none; display: flex; flex-direction: column; border-left: 1px solid #a8a49c; box-shadow: -4px 0 0 -3px #fff; }
.hruler-row { height: 28px; flex: none; padding: 5px 0 0 47px; }
.hruler { position: relative; width: 688px; height: 13px; background: #fff; display: flex; padding-left: 3.500px; overflow: hidden; }
.hruler span { flex: 0 0 27.200px; text-align: center; line-height: 13px; font-size: 10px; letter-spacing: 0; background-image: linear-gradient(#000, #000), linear-gradient(#000, #000), linear-gradient(#000, #000); background-size: 1px 5px, 1px 1px, 1px 1px; background-position: 0 4px, 7px 6px, 20px 6px; background-repeat: no-repeat; }
.hmark { position: absolute; left: 664px; top: 0; width: 1px; height: 13px; border-left: 1px dashed #000; }
.work-row { height: 547px; flex: none; display: flex; }
.vruler-col { width: 28px; flex: none; padding: 15px 0 0 5px; }
.vruler { position: relative; width: 13px; height: 516px; background: #fff; display: flex; flex-direction: column; justify-content: center; align-items: stretch; overflow: hidden; }
.vruler span { flex: 0 0 27.300px; display: flex; align-items: center; justify-content: center; background-image: linear-gradient(#000, #000), linear-gradient(#000, #000), linear-gradient(#000, #000); background-size: 5px 1px, 1px 1px, 1px 1px; background-position: 4px 0, 6px 7px, 6px 20px; background-repeat: no-repeat; }
.vruler b { font-weight: 400; font-size: 10px; writing-mode: vertical-rl; transform: rotate(180deg); }
.vmark { position: absolute; left: -2px; top: 87px; width: 17px; border-top: 1px dashed #000; }
.work { width: 729px; height: 547px; flex: none; background: #808080; padding: 13px 0 0 18px; }
.slide { width: 692px; height: 520px; background: #fff; border: 1px solid #000; box-shadow: 4px 4px 0 #000; padding: 19px 34px 0; display: flex; flex-direction: column; gap: 13px; font-family: "Liberation Sans", Arial, sans-serif; letter-spacing: 0; }
.ph { border: 1px dotted #777; width: 622px; flex: none; }
.ph-title { height: 88px; font-size: 42px; letter-spacing: 0.15px; display: flex; align-items: center; justify-content: center; padding-top: 4px; }
.ph-body { height: 343px; display: flex; flex-direction: column; align-items: center; padding-top: 125px; background: #fff; }
.org { width: 48px; height: 48px; flex: none; background: repeating-conic-gradient(#c0c0c0 0 25%, #fff 0 50%) 0 0 / 2px 2px; }
.ph-text { font-size: 30.800px; line-height: 36px; text-align: center; margin-top: 18px; white-space: nowrap; }

.hscroll-row { height: 16px; flex: none; display: flex; }
.views { width: 46px; display: flex; flex: none; }
.view { width: 15px; height: 16px; display: flex; align-items: center; justify-content: center; flex: none; }
.view.on { border: 1px solid #0a246a; background: #e1e6f0; }
.view svg { width: 14px; height: 14px; }
.sbtn { width: 15px; height: 16px; flex: none; background: #d4d0c8; border: 1px solid; border-color: #fff #808080 #808080 #fff; display: flex; align-items: center; justify-content: center; }
.strack { flex: 1; background: repeating-conic-gradient(#d4d0c8 0 25%, #fff 0 50%) 0 0 / 2px 2px; }
.tri-l, .tri-r, .tri-u, .tri-d { width: 0; height: 0; border: 4px solid transparent; }
.tri-l { border-right: 4px solid #808080; border-left: 0; }
.tri-r { border-left: 4px solid #808080; border-right: 0; }
.tri-u { border-bottom: 4px solid #000; border-top: 0; }
.tri-d { border-top: 4px solid #000; border-bottom: 0; }

.pane { width: 230px; height: 593px; margin: 2px 0 0 2px; flex: none; background: #e8e6e1; border-radius: 3px; display: flex; flex-direction: column; padding-left: 1px; }
.pane-head { height: 26px; flex: none; display: flex; align-items: center; padding: 2px 3px 0 4px; background: linear-gradient(#f4f3ee, #e0ddd5); border-radius: 3px 3px 0 0; }
.pane-title { font: bold 10px/1 "DejaVu Sans", sans-serif; letter-spacing: 0; margin-left: 3px; flex: 1; }
.pane-caret { margin-right: 9px; }
.pane-x { width: 12px; height: 12px; margin-right: 2px; }
.pane-nav { width: 88px; height: 19px; flex: none; background: linear-gradient(#aaa, #8a8a8a); border-radius: 0 0 6px 0; display: flex; align-items: center; padding-left: 6px; }
.nav-ic { width: 15px; height: 15px; flex: none; }
.nav-sep { width: 1px; height: 13px; background: #ddd; margin: 0 7px; flex: none; }
.pane-label { font: bold 10px/1 "DejaVu Sans", sans-serif; letter-spacing: 0; padding-top: 1px; margin: 9px 0 0 5px; height: 14px; flex: none; }
.list { width: 216px; height: 497px; margin: 0 0 0 6px; border: 1px solid #000; background: #fff; display: flex; flex: none; }
.list-main { width: 198px; flex: none; }
.thumbs { display: grid; grid-template-columns: 99px 99px; grid-auto-rows: 62px; row-gap: 4px; padding-top: 2px; background: linear-gradient(#c0c0c0, #c0c0c0) 98px 0 / 1px 100% no-repeat; height: 132px; }
.t2 { height: 328px; padding-top: 1px; background-size: 1px 325px; }
.cell { width: 96px; height: 62px; margin-left: 1px; padding: 2px 10px; border: 2px solid transparent; }
.sel { border-color: #0a246a; }
.th { width: 72px; height: 54px; display: block; }
.group { height: 24px; background: #d4d0c8; font: bold 10px/25px "DejaVu Sans", sans-serif; letter-spacing: 0; padding-left: 5px; }
.vscroll { width: 16px; flex: none; display: flex; flex-direction: column; }
.sbtn.v { width: 16px; height: 17px; }
.vtrack { height: 250px; flex: none; background: repeating-conic-gradient(#d4d0c8 0 25%, #fff 0 50%) 0 0 / 2px 2px; }
.vthumb { flex: 1; background: #d4d0c8; border: 1px solid; border-color: #fff #404040 #404040 #fff; }
.show { display: flex; align-items: center; margin: 4px 0 0 7px; }
.chk { width: 12px; height: 12px; border: 1px solid #808080; background: #fff; margin-right: 4px; flex: none; display: block; }
.chk svg { width: 10px; height: 10px; display: block; }

.draw-band { height: 27px; flex: none; background: #f5f4ef; padding-top: 1px; }
.tb3 { width: 625px; height: 26px; margin-left: 3px; padding-left: 4px; }
.act { margin-left: 2px; padding: 0 3px 0 3px; gap: 3px; width: 64px; }
.cur { width: 22px; margin-left: 0; }
.shapes { gap: 3px; width: 78px; }
.status { flex: 1; display: flex; gap: 5px; padding: 3px 0 0 4px; background: #d4d0c8; border-bottom: 1px solid #d4d0c8; }
.panel { height: 18px; border: 1px solid #e4e2dc; display: flex; align-items: center; justify-content: center; flex: none; }
.p1 { width: 245px; }
.p2 { width: 245px; }
.p3 { width: 177px; }
.p4 { width: 31px; justify-content: flex-start; padding-left: 4px; }
.book { width: 20px; height: 16px; }
```
